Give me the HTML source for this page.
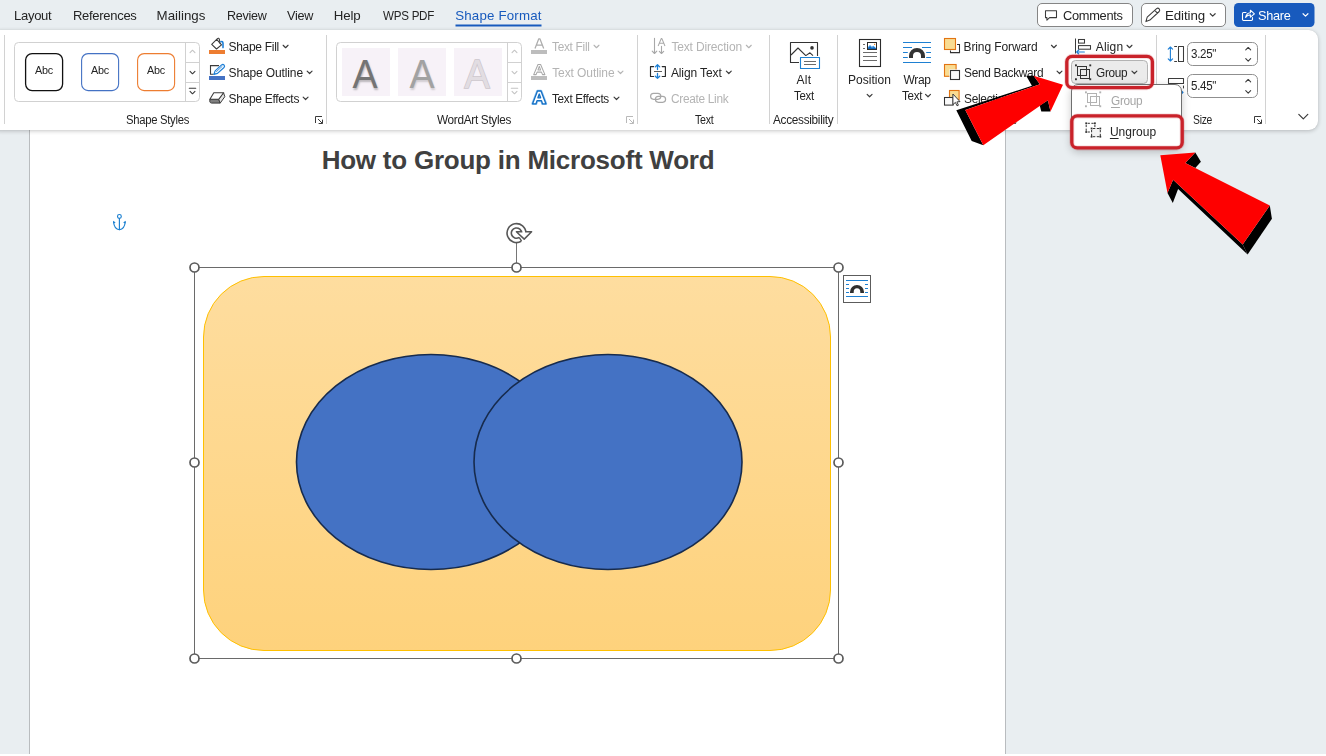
<!DOCTYPE html>
<html lang="en">
<head>
<meta charset="utf-8">
<title>How to Group in Microsoft Word</title>
<style>
*{box-sizing:border-box;margin:0;padding:0}
html,body{width:1326px;height:756px;overflow:hidden;background:#e9eef1}
body{position:relative;font-family:"Liberation Sans",sans-serif;font-size:13px;color:#242424}
.t{position:absolute;white-space:nowrap;line-height:16px;height:16px;transform-origin:0 50%}
.t u{text-decoration-thickness:1px;text-underline-offset:1.5px}
#tabbar{position:absolute;left:0;top:0;width:1326px;height:31px;background:#e9eef1}
#ribbon{position:absolute;left:-10px;top:30px;width:1328px;height:100px;background:#fff;border-radius:9px;box-shadow:0 1px 4px rgba(0,0,0,.22),0 0 1px rgba(0,0,0,.10)}
#page{position:absolute;left:29px;top:130px;width:977px;height:640px;background:#fff;border-left:1px solid #b9bcbf;border-right:1px solid #b9bcbf}
#title{position:absolute;left:0;top:143px;width:1036px;text-align:center;font-weight:bold;font-size:26px;line-height:34px;letter-spacing:-0.23px;color:#404040}
#menu{position:absolute;left:1071px;top:84px;width:111px;height:65px;background:#fff;border:1px solid #6f6f6f;border-radius:7px;box-shadow:0 3px 8px rgba(0,0,0,.22)}
svg{position:absolute;left:0;top:0;overflow:visible}
.gl{position:absolute;left:0;top:0;width:1326px;height:756px;will-change:transform;pointer-events:none}
.wa{position:absolute;font-size:40.5px;line-height:48px;width:48px;height:48px;text-align:center;top:50px;transform:scaleX(0.93)}
</style>
</head>
<body>
<div id="page"></div>
<div id="title">How to Group in Microsoft Word</div>

<svg width="1326" height="756" viewBox="0 0 1326 756">
  <defs>
    <linearGradient id="gold" x1="0" y1="0" x2="0" y2="1">
      <stop offset="0" stop-color="#fedd9f"/>
      <stop offset="1" stop-color="#fed27c"/>
    </linearGradient>
  </defs>
  <rect x="203.5" y="276.5" width="627" height="374" rx="60.5" ry="60.5" fill="url(#gold)" stroke="#ffc000" stroke-width="1"/>
  <ellipse cx="431" cy="462" rx="134.5" ry="107.5" fill="#4472c4" stroke="#172b4d" stroke-width="1.6"/>
  <ellipse cx="608" cy="462" rx="134" ry="107.5" fill="#4472c4" stroke="#172b4d" stroke-width="1.6"/>
  <rect x="194.5" y="267.5" width="644" height="391" fill="none" stroke="#6a6a6a" stroke-width="1"/>
  <line x1="516.5" y1="243" x2="516.5" y2="263" stroke="#767676" stroke-width="1"/>
  <g fill="#fff" stroke="#5a5a5a" stroke-width="1.7">
    <circle cx="194.5" cy="267.5" r="4.5"/><circle cx="516.5" cy="267.5" r="4.5"/><circle cx="838.5" cy="267.5" r="4.5"/>
    <circle cx="194.5" cy="462.5" r="4.5"/><circle cx="838.5" cy="462.5" r="4.5"/>
    <circle cx="194.5" cy="658.5" r="4.5"/><circle cx="516.5" cy="658.5" r="4.5"/><circle cx="838.5" cy="658.5" r="4.5"/>
  </g>
<!-- anchor -->
<g fill="none" stroke="#1a7fd0" stroke-width="1.15" stroke-linecap="round">
  <circle cx="119.4" cy="216.4" r="1.9"/>
  <path d="M119.4,218.6 V229.6"/>
  <path d="M113.6,222 Q114.2,229.2 119.4,229.7 Q124.6,229.2 125.2,222"/>
</g>
<path d="M113.1,220.8 L115.7,222.5 L113.3,223.6 Z M125.7,220.8 L123.1,222.5 L125.5,223.6 Z" fill="#1a7fd0"/>
<!-- rotate handle -->
<path d="M523.8,233.1 A7.3,7.3 0 1 0 520.15,239.42" fill="none" stroke="#575757" stroke-width="5.9"/>
<path d="M516.4,231.7 H531.6 L524.2,239.1 Z" fill="#fff" stroke="#575757" stroke-width="1.5" stroke-linejoin="round"/>
<path d="M523.8,233.6 V233.1 A7.3,7.3 0 1 0 520.15,239.42" fill="none" stroke="#fff" stroke-width="2.7"/>
<path d="M519.2,237.4 L521.6,241.2" stroke="#575757" stroke-width="1.3" fill="none"/>
<!-- layout options button -->
<rect x="843.5" y="275.5" width="27" height="27" fill="#fff" stroke="#5c5c5c"/>
<path d="M846,280.5 H868 M846,296.5 H868 M846,284.5 H849 M865,284.5 H868 M846,288.5 H849 M865,288.5 H868 M846,292.5 H849 M865,292.5 H868" stroke="#1e80d2" stroke-width="1" fill="none"/>
<path d="M850,293 V292 A7,7 0 0 1 864,292 V293 H860.3 V292 A3.3,3.7 0 0 0 853.7,292 V293 Z" fill="#2f2f2f"/>

</svg>

<div style="position:absolute;left:0;top:754px;width:1326px;height:2px;background:#fff"></div>
<div id="tabbar"></div>
<div id="ribbon"></div>

<svg width="1326" height="756" viewBox="0 0 1326 756">
<!-- ===== group separators ===== -->
<g stroke="#d2d2d2" stroke-width="1">
  <line x1="4.5" y1="35" x2="4.5" y2="124"/>
  <line x1="326.5" y1="35" x2="326.5" y2="124"/>
  <line x1="637.5" y1="35" x2="637.5" y2="124"/>
  <line x1="769.5" y1="35" x2="769.5" y2="124"/>
  <line x1="837.5" y1="35" x2="837.5" y2="124"/>
  <line x1="1156.5" y1="35" x2="1156.5" y2="124"/>
  <line x1="1265.5" y1="35" x2="1265.5" y2="124"/>
</g>
<!-- ===== Shape styles gallery ===== -->
<rect x="14.5" y="42.5" width="185" height="59" rx="4" fill="#fff" stroke="#d1d1d1"/>
<g stroke="#d1d1d1" stroke-width="1"><line x1="185.5" y1="43" x2="185.5" y2="101"/><line x1="186" y1="62.5" x2="199" y2="62.5"/><line x1="186" y1="82.5" x2="199" y2="82.5"/></g>
<rect x="25.6" y="53.6" width="37" height="37" rx="6.5" fill="#fff" stroke="#111" stroke-width="1.3"/>
<rect x="81.6" y="53.6" width="37" height="37" rx="6.5" fill="#fff" stroke="#4472c4" stroke-width="1.1"/>
<rect x="137.6" y="53.6" width="37" height="37" rx="6.5" fill="#fff" stroke="#ed7d31" stroke-width="1.1"/>
<g fill="none" stroke-width="1.1" stroke-linecap="round" stroke-linejoin="round">
  <polyline points="190.05,52.68 192.50,50.23 194.95,52.68" stroke="#c4c4c4"/>
  <polyline points="190.05,71.33 192.50,73.78 194.95,71.33" stroke="#3b3b3b"/>
  <line x1="189.3" y1="88.3" x2="195.7" y2="88.3" stroke="#3b3b3b"/>
  <polyline points="190.05,91.33 192.50,93.78 194.95,91.33" stroke="#3b3b3b"/>
</g>
<!-- Shape Fill icon -->
<rect x="209" y="50" width="16" height="4" fill="#ed7d31"/>
<g fill="none" stroke="#3b3b3b" stroke-width="1.1" stroke-linejoin="round" stroke-linecap="round">
  <path d="M211.7,44.4 L216.7,39.4 L221.5,44.9 L216.5,49 Z" fill="#fff"/>
  <path d="M216.7,39.6 Q217.4,37.9 218.6,38.3 Q219.7,38.8 219.8,43"/>
</g>
<path d="M220.9,41.7 Q222.7,40.9 223,43.4 V47.6" fill="none" stroke="#1e7fd6" stroke-width="1.6" stroke-linecap="round"/>
<!-- Shape Outline icon -->
<rect x="209" y="76" width="16" height="4" fill="#4472c4"/>
<path d="M219,65.6 H210.5 V74.2 H213.6" fill="none" stroke="#3b3b3b" stroke-width="1.1"/>
<path d="M213.9,74.5 L215.1,70.9 L221.6,64.9 Q223,63.9 224.1,65.1 Q225.1,66.3 224,67.5 L217.5,73.4 Z" fill="#fff" stroke="#1e7fd6" stroke-width="1.2" stroke-linejoin="round"/>
<path d="M216.2,71.8 L222.4,66.2" stroke="#1e7fd6" stroke-width="0.8" fill="none"/>
<path d="M213.9,74.5 L214.6,72.4 L216,73.8 Z" fill="#1e7fd6"/>
<!-- Shape Effects icon -->
<path d="M209.9,99.2 H218.7 L220.2,103.1 H211.6 Q210.2,103 209.8,101.6 Z" fill="#7f7f7f" stroke="#3b3b3b" stroke-width="1" stroke-linejoin="round"/>
<path d="M223.6,92.8 L224.8,96.7 L220.2,103.1 L218.7,99.2 Z" fill="#e4e4e4" stroke="#3b3b3b" stroke-width="1" stroke-linejoin="round"/>
<path d="M213.8,92.7 H223.6 L218.7,99.2 H209.9 Z" fill="#fff" stroke="#3b3b3b" stroke-width="1.05" stroke-linejoin="round"/>
<!-- chevrons for small buttons -->
<g fill="none" stroke="#3b3b3b" stroke-width="1.15" stroke-linecap="round" stroke-linejoin="round">
  <polyline points="283.15,45.27 285.60,47.73 288.05,45.27"/>
  <polyline points="307.15,71.08 309.60,73.52 312.05,71.08"/>
  <polyline points="303.15,97.08 305.60,99.52 308.05,97.08"/>
  <polyline points="614.05,97.08 616.50,99.52 618.95,97.08"/>
  <polyline points="726.35,71.08 728.80,73.52 731.25,71.08"/>
</g>
<g fill="none" stroke="#b4b4b4" stroke-width="1.15" stroke-linecap="round" stroke-linejoin="round">
  <polyline points="594.05,45.27 596.50,47.73 598.95,45.27"/>
  <polyline points="618.05,71.08 620.50,73.52 622.95,71.08"/>
  <polyline points="746.35,45.27 748.80,47.73 751.25,45.27"/>
</g>
<!-- dialog launchers -->
<g fill="none" stroke="#3b3b3b" stroke-width="1">
  <path d="M315.5,123 V116.5 H322"/><path d="M318,119 L322.3,123.3 M322.5,119.6 V123.5 H318.6"/>
  <path d="M1254.5,123 V116.5 H1261"/><path d="M1257,119 L1261.3,123.3 M1261.5,119.6 V123.5 H1257.6"/>
</g>
<g fill="none" stroke="#b9b9b9" stroke-width="1">
  <path d="M626.5,123 V116.5 H633"/><path d="M629,119 L633.3,123.3 M633.5,119.6 V123.5 H629.6"/>
</g>
<!-- ===== WordArt gallery ===== -->
<rect x="336.5" y="42.5" width="185" height="59" rx="4" fill="#fff" stroke="#d1d1d1"/>
<g stroke="#d1d1d1" stroke-width="1"><line x1="507.5" y1="43" x2="507.5" y2="101"/><line x1="508" y1="62.5" x2="521" y2="62.5"/><line x1="508" y1="82.5" x2="521" y2="82.5"/></g>
<rect x="342" y="48" width="48" height="48" fill="#f7f2f8"/>
<rect x="398" y="48" width="48" height="48" fill="#f7f2f8"/>
<rect x="454" y="48" width="48" height="48" fill="#f7f2f8"/>
<g fill="none" stroke="#c4c4c4" stroke-width="1.1" stroke-linecap="round" stroke-linejoin="round">
  <polyline points="512.05,52.68 514.50,50.23 516.95,52.68"/>
  <polyline points="512.05,71.33 514.50,73.78 516.95,71.33"/>
  <line x1="511.3" y1="88.3" x2="517.7" y2="88.3"/>
  <polyline points="512.05,91.33 514.50,93.78 516.95,91.33"/>
</g>
<!-- Text Fill / Text Outline / Text Effects icons -->
<rect x="531" y="50" width="16" height="4" fill="#bdbdbd"/>
<path d="M535,48.6 L538.8,38.8 H539.9 L543.7,48.6 M536.3,45.2 H542.4" fill="none" stroke="#adadad" stroke-width="1.25" stroke-linejoin="round"/>
<rect x="531" y="76" width="16" height="4" fill="#bdbdbd"/>
<path d="M533.7,74.6 L538,64.5 H540.6 L544.9,74.6 H542.5 L541.5,72.1 H537.1 L536.1,74.6 Z M538,69.9 H540.6 L539.3,66.4 Z" fill="#fff" stroke="#a8a8a8" stroke-width="1.05" stroke-linejoin="round" fill-rule="evenodd"/>
<path d="M532.6,103.8 L537.5,91 H541 L545.9,103.8 H542.5 L541.5,100.7 H537 L536,103.8 Z M537.9,97.8 H540.6 L539.25,94 Z" fill="#fff" stroke="#8fc4f2" stroke-width="2.6" stroke-linejoin="round" fill-rule="evenodd"/>
<path d="M532.6,103.8 L537.5,91 H541 L545.9,103.8 H542.5 L541.5,100.7 H537 L536,103.8 Z M537.9,97.8 H540.6 L539.25,94 Z" fill="#fff" stroke="#1670c4" stroke-width="1.3" stroke-linejoin="round" fill-rule="evenodd"/>
<!-- Text Direction icon -->
<g fill="none" stroke="#a8a8a8" stroke-width="1.1" stroke-linecap="round" stroke-linejoin="round">
  <path d="M654.5,38.2 V53.4 M652.2,51.2 L654.5,53.5 L656.8,51.2"/>
  <path d="M661.5,46.4 V53.4 M659.3,51.3 L661.5,53.5 L663.7,51.3"/>
  <path d="M658.3,45.6 L661.2,38.6 H661.9 L664.8,45.6 M659.4,43.2 H663.7"/>
</g>
<!-- Align Text icon -->
<g fill="none" stroke-linecap="round" stroke-linejoin="round">
  <path d="M653.6,66.6 H650.5 V76.5 H653.6 M662.2,66.6 H665.4 V76.5 H662.2" stroke="#2b2b2b" stroke-width="1.15"/>
  <line x1="654.4" y1="71.5" x2="661.6" y2="71.5" stroke="#555" stroke-width="0.95"/>
  <path d="M657.5,69.6 V64.8 M655.3,66.9 L657.5,64.7 L659.7,66.9 M657.5,73.4 V78.3 M655.3,76.2 L657.5,78.4 L659.7,76.2" stroke="#1b7fd6" stroke-width="1.3"/>
</g>
<!-- Create Link icon -->
<g fill="none" stroke="#a8a8a8" stroke-width="1.2">
  <rect x="650.6" y="93.4" width="10.2" height="5.9" rx="2.95"/>
  <rect x="655.4" y="96.4" width="10.2" height="5.9" rx="2.95"/>
</g>

<!-- ===== Alt Text icon ===== -->
<g fill="none" stroke-linejoin="round">
  <rect x="790.5" y="42.5" width="27" height="20" fill="#fff" stroke="#333" stroke-width="1.1"/>
  <path d="M791,55 L798,48 L805.8,55.6 L810,52.8 L813,55.6" stroke="#333" stroke-width="1.1"/>
  <circle cx="812" cy="47.9" r="1.8" fill="#333"/>
  <rect x="799" y="56" width="22" height="14" fill="#fff"/>
  <rect x="800.5" y="57.5" width="19" height="11" fill="#fff" stroke="#1e80d2" stroke-width="1.1"/>
  <path d="M804,61.5 H816 M804,64.5 H816" stroke="#6b6b6b" stroke-width="1"/>
</g>
<!-- ===== Position icon ===== -->
<g fill="none">
  <rect x="859.5" y="39.5" width="21" height="27" fill="#fff" stroke="#2b2b2b" stroke-width="1.1"/>
  <rect x="867.5" y="42.5" width="9" height="7" fill="#fff" stroke="#2b2b2b" stroke-width="1"/>
  <path d="M868,49 V47 L870,45 L871.8,46.8 L873.4,45.8 L876,48 V49 Z" fill="#3d97e6"/>
  <path d="M868,49 V48 L870,46.6 L872,48.2 L874,47.2 L876,48.6 V49 Z" fill="#1565b5"/>
  <rect x="874" y="43.8" width="1.2" height="1.2" fill="#f08a24"/>
  <path d="M863,44.5 H865 M863,48.5 H865 M863,52.5 H877 M863,56.5 H877 M863,60.5 H877" stroke="#6b6b6b" stroke-width="1"/>
</g>
<!-- ===== Wrap Text icon ===== -->
<g fill="none">
  <path d="M903,42.5 H931 M903,62.5 H931 M903,47.5 H912 M922,47.5 H931 M903,52.5 H907.8 M926.2,52.5 H931 M903,57.5 H907.8 M926.2,57.5 H931" stroke="#1e80d2" stroke-width="1"/>
  <path d="M909,58 V56 A8,8 0 0 1 925,56 V58 H921 V56 A4,4 0 0 0 913,56 V58 Z" fill="#333"/>
</g>
<g fill="none" stroke="#3b3b3b" stroke-width="1.15" stroke-linecap="round" stroke-linejoin="round">
  <polyline points="867.15,94.33 869.60,96.78 872.05,94.33"/>
  <polyline points="925.55,94.33 928.00,96.78 930.45,94.33"/>
  <polyline points="1051.45,45.27 1053.90,47.73 1056.35,45.27"/>
  <polyline points="1057.05,71.08 1059.50,73.52 1061.95,71.08"/>
  <polyline points="1127.05,45.27 1129.50,47.73 1131.95,45.27"/>
</g>
<!-- ===== Bring Forward ===== -->
<path d="M957,44.5 H959.5 V52.6 H950.5 V50.6" fill="none" stroke="#333" stroke-width="1.05"/>
<rect x="944.5" y="38.5" width="11" height="11" fill="#f9dc92" stroke="#e27412" stroke-width="1.1"/>
<!-- ===== Send Backward ===== -->
<rect x="944.5" y="64.5" width="11.6" height="11.8" fill="#f9dc92" stroke="#e27412" stroke-width="1.1"/>
<rect x="949.4" y="69.4" width="11.2" height="11.2" fill="#fff"/>
<rect x="950.5" y="70.5" width="9" height="9" fill="#fafafa" stroke="#333" stroke-width="1.1"/>
<!-- ===== Selection Pane ===== -->
<rect x="949.5" y="90.5" width="9.6" height="9" fill="#f9dc92" stroke="#e27412" stroke-width="1.1"/>
<rect x="944.5" y="97.5" width="8.6" height="7.6" fill="#fafafa" stroke="#333" stroke-width="1.05"/>
<path d="M952.9,94 V104.6 L955.4,102.4 L957,105.8 L958.4,105.2 L956.9,101.9 L960,101.6 Z" fill="#fff" stroke="#333" stroke-width="0.95" stroke-linejoin="round"/>
<!-- ===== Align ===== -->
<g fill="none" stroke="#3b3b3b" stroke-width="1.05">
  <line x1="1075.5" y1="38.5" x2="1075.5" y2="53.5"/>
  <rect x="1078.5" y="39.5" width="6" height="3.6" fill="#fff"/>
  <rect x="1078.5" y="45.6" width="12" height="3.6" fill="#fff"/>
</g>
<path d="M1084.4,52 H1076.6 M1078.8,50 L1076.6,52 L1078.8,54" fill="none" stroke="#1e7fd6" stroke-width="1.05" stroke-linecap="round" stroke-linejoin="round"/>
<!-- ===== Size icons ===== -->
<g fill="none" stroke-linecap="round" stroke-linejoin="round">
  <path d="M1170.4,47 V61 M1168.2,49.2 L1170.4,47 L1172.6,49.2 M1168.2,58.8 L1170.4,61 L1172.6,58.8" stroke="#1e7fd6" stroke-width="1.1"/>
  <path d="M1174.6,46.5 H1176.6 M1174.6,61.5 H1176.6" stroke="#3b3b3b" stroke-width="1"/>
  <rect x="1178.5" y="46.5" width="5" height="15" stroke="#3b3b3b" stroke-width="1.05" fill="#fff"/>
  <rect x="1168.5" y="78.5" width="15" height="5" stroke="#3b3b3b" stroke-width="1.05" fill="#fff"/>
  <path d="M1168.5,86 V88 M1183.5,86 V88" stroke="#3b3b3b" stroke-width="1"/>
  <path d="M1169,92.4 H1183 M1171.2,90.2 L1169,92.4 L1171.2,94.6 M1180.8,90.2 L1183,92.4 L1180.8,94.6" stroke="#1e7fd6" stroke-width="1.1"/>
</g>
<rect x="1187.5" y="42.5" width="70" height="23" rx="5" fill="#fff" stroke="#8f8f8f"/>
<rect x="1187.5" y="74.5" width="70" height="23" rx="5" fill="#fff" stroke="#8f8f8f"/>
<g fill="none" stroke="#3b3b3b" stroke-width="1.1" stroke-linecap="round" stroke-linejoin="round">
  <polyline points="1245.75,49.93 1248.20,47.48 1250.65,49.93"/>
  <polyline points="1245.75,58.68 1248.20,61.13 1250.65,58.68"/>
  <polyline points="1245.75,81.92 1248.20,79.48 1250.65,81.92"/>
  <polyline points="1245.75,90.68 1248.20,93.12 1250.65,90.68"/>
  <polyline points="1298.8,114.4 1303.3,118.9 1307.8,114.4" stroke-width="1.2"/>
</g>

<!-- ===== top right buttons ===== -->
<rect x="1037.5" y="3.5" width="95" height="23" rx="4.5" fill="#fff" stroke="#858585"/>
<rect x="1141.5" y="3.5" width="84" height="23" rx="4.5" fill="#fff" stroke="#858585"/>
<rect x="1234" y="3" width="80.5" height="24" rx="4.5" fill="#185abd"/>
<path d="M1045.5,10.8 H1056.5 V17.6 H1049.6 L1046.9,20.2 V17.6 H1045.5 Z" fill="none" stroke="#3b3b3b" stroke-width="1.05" stroke-linejoin="round"/>
<path d="M1145.9,21.6 L1147.2,17.2 L1156.6,8.6 Q1158,7.6 1159.2,8.9 Q1160.3,10.2 1159.2,11.5 L1149.9,20.1 Z M1154.8,10.4 L1157.4,13.2" fill="none" stroke="#3b3b3b" stroke-width="1.05" stroke-linejoin="round"/>
<g fill="none" stroke="#fff" stroke-width="1.1" stroke-linejoin="round" stroke-linecap="round">
  <path d="M1246,12.5 H1243.5 Q1242.5,12.6 1242.5,13.6 V19.4 Q1242.6,20.4 1243.5,20.5 H1251.4 Q1252.4,20.4 1252.5,19.4 V17.6"/>
  <path d="M1245.6,17.4 Q1246.6,13 1250.4,12.8 V10.2 L1254.4,13.8 L1250.4,17.2 V14.9 Q1247.6,14.8 1245.6,17.4 Z"/>
</g>
<g fill="none" stroke-width="1.15" stroke-linecap="round" stroke-linejoin="round">
  <polyline points="1210.25,13.72 1212.70,16.18 1215.15,13.72" stroke="#3b3b3b"/>
  <polyline points="1303.05,13.72 1305.50,16.18 1307.95,13.72" stroke="#fff"/>
</g>
<rect x="455.5" y="24.5" width="86" height="2" fill="#185abd"/>

<!-- Group button (pressed) -->
<rect x="1071.5" y="60.5" width="76" height="23" rx="4" fill="#ebebeb" stroke="#b3b3b3"/>
<g fill="none" stroke="#333" stroke-width="1"><rect x="1077.5" y="66.5" width="9" height="9" /><rect x="1080.5" y="69.5" width="9" height="9" /></g><g fill="#333"><rect x="1075.0" y="64.4" width="1.9" height="1.9" /><rect x="1089.3" y="64.4" width="1.9" height="1.9" /><rect x="1075.0" y="78.3" width="1.9" height="1.9" /><rect x="1089.3" y="78.3" width="1.9" height="1.9" /></g>
<polyline points="1131.95,71.08 1134.40,73.52 1136.85,71.08" fill="none" stroke="#3b3b3b" stroke-width="1.15" stroke-linecap="round" stroke-linejoin="round"/>

</svg>

<div class="wa" style="left:340.7px;color:#747474;text-shadow:1px 1.5px 2px rgba(0,0,0,.25)">A</div>
<div class="wa" style="left:397.7px;color:#a2a2a2;text-shadow:1px 1.5px 2px rgba(0,0,0,.16)">A</div>
<div class="wa" style="left:453.4px;color:#e2dde2;-webkit-text-stroke:1.5px #ccc6cc;paint-order:stroke fill">A</div>

<div class="gl">
<div class="t" style="left:13.82px;top:8px;font-size:13.3px;letter-spacing:-0.300px;transform:scaleX(0.9813);color:#242424;">Layout</div>
<div class="t" style="left:72.52px;top:8px;font-size:13.3px;letter-spacing:-0.300px;transform:scaleX(0.9782);color:#242424;">References</div>
<div class="t" style="left:156.60px;top:8px;font-size:13.3px;letter-spacing:0.000px;color:#242424;">Mailings</div>
<div class="t" style="left:226.86px;top:8px;font-size:13.3px;letter-spacing:-0.300px;transform:scaleX(0.9446);color:#242424;">Review</div>
<div class="t" style="left:287.20px;top:8px;font-size:13.3px;letter-spacing:-0.300px;transform:scaleX(0.9502);color:#242424;">View</div>
<div class="t" style="left:333.70px;top:8px;font-size:13.3px;letter-spacing:-0.100px;color:#242424;">Help</div>
<div class="t" style="left:383.30px;top:8px;font-size:13.3px;letter-spacing:-0.300px;transform:scaleX(0.8733);color:#242424;">WPS PDF</div>
<div class="t" style="left:455.20px;top:8px;font-size:13.3px;letter-spacing:0.182px;color:#185abd;">Shape Format</div>
<div class="t" style="left:1062.50px;top:8px;font-size:13.3px;letter-spacing:-0.300px;transform:scaleX(0.9645);color:#242424;">Comments</div>
<div class="t" style="left:1164.90px;top:8px;font-size:13.3px;letter-spacing:-0.050px;color:#242424;">Editing</div>
<div class="t" style="left:1257.75px;top:8px;font-size:13.3px;letter-spacing:-0.300px;transform:scaleX(0.9543);color:#fff;">Share</div>
<div class="t" style="left:35.30px;top:62px;font-size:11px;letter-spacing:-0.300px;transform:scaleX(0.9837);color:#242424;">Abc</div>
<div class="t" style="left:91.30px;top:62px;font-size:11px;letter-spacing:-0.300px;transform:scaleX(0.9837);color:#242424;">Abc</div>
<div class="t" style="left:147.30px;top:62px;font-size:11px;letter-spacing:-0.300px;transform:scaleX(0.9837);color:#242424;">Abc</div>
<div class="t" style="left:228.50px;top:39px;font-size:12px;letter-spacing:-0.300px;color:#242424;">Shape Fill</div>
<div class="t" style="left:228.50px;top:65px;font-size:12px;letter-spacing:-0.125px;color:#242424;">Shape Outline</div>
<div class="t" style="left:228.50px;top:91px;font-size:12px;letter-spacing:-0.300px;color:#242424;">Shape Effects</div>
<div class="t" style="left:125.96px;top:112px;font-size:12px;letter-spacing:-0.300px;transform:scaleX(0.9385);color:#242424;">Shape Styles</div>
<div class="t" style="left:552.20px;top:39px;font-size:12px;letter-spacing:-0.300px;transform:scaleX(0.9894);color:#b4b4b4;">Text Fill</div>
<div class="t" style="left:552.20px;top:65px;font-size:12px;letter-spacing:-0.091px;color:#b4b4b4;">Text Outline</div>
<div class="t" style="left:552.20px;top:91px;font-size:12px;letter-spacing:-0.300px;transform:scaleX(0.9779);color:#242424;">Text Effects</div>
<div class="t" style="left:436.80px;top:112px;font-size:12px;letter-spacing:-0.300px;transform:scaleX(0.9803);color:#242424;">WordArt Styles</div>
<div class="t" style="left:671.40px;top:39px;font-size:12px;letter-spacing:-0.154px;color:#b4b4b4;">Text Direction</div>
<div class="t" style="left:670.90px;top:65px;font-size:12px;letter-spacing:-0.100px;color:#242424;">Align Text</div>
<div class="t" style="left:671.40px;top:91px;font-size:12px;letter-spacing:-0.300px;transform:scaleX(0.9879);color:#b4b4b4;">Create Link</div>
<div class="t" style="left:694.80px;top:112px;font-size:12px;letter-spacing:-0.300px;transform:scaleX(0.8910);color:#242424;">Text</div>
<div class="t" style="left:796.50px;top:72px;font-size:12px;letter-spacing:0.250px;color:#242424;">Alt</div>
<div class="t" style="left:793.70px;top:88px;font-size:12px;letter-spacing:-0.300px;transform:scaleX(0.9526);color:#242424;">Text</div>
<div class="t" style="left:773.20px;top:112px;font-size:12px;letter-spacing:-0.300px;transform:scaleX(0.9837);color:#242424;">Accessibility</div>
<div class="t" style="left:848.10px;top:72px;font-size:12px;letter-spacing:0.014px;color:#242424;">Position</div>
<div class="t" style="left:903.40px;top:72px;font-size:12px;letter-spacing:-0.300px;color:#242424;">Wrap</div>
<div class="t" style="left:902.20px;top:88px;font-size:12px;letter-spacing:-0.300px;transform:scaleX(0.9668);color:#242424;">Text</div>
<div class="t" style="left:963.50px;top:39px;font-size:12px;letter-spacing:-0.108px;color:#242424;">Bring Forward</div>
<div class="t" style="left:963.51px;top:65px;font-size:12px;letter-spacing:-0.300px;transform:scaleX(0.9899);color:#242424;">Send Backward</div>
<div class="t" style="left:963.51px;top:91px;font-size:12px;letter-spacing:-0.300px;transform:scaleX(0.9921);color:#242424;">Selection Pane</div>
<div class="t" style="left:977.00px;top:112px;font-size:12px;letter-spacing:-0.300px;transform:scaleX(0.9830);color:#242424;">Arrange</div>
<div class="t" style="left:1095.70px;top:39px;font-size:12px;letter-spacing:0.200px;color:#242424;">Align</div>
<div class="t" style="left:1096.00px;top:65px;font-size:12px;letter-spacing:-0.300px;transform:scaleX(0.9843);color:#242424;">Group</div>
<div class="t" style="left:1190.80px;top:46px;font-size:12px;letter-spacing:-0.300px;transform:scaleX(0.9612);color:#242424;">3.25"</div>
<div class="t" style="left:1190.80px;top:78px;font-size:12px;letter-spacing:-0.300px;transform:scaleX(0.9612);color:#242424;">5.45"</div>
<div class="t" style="left:1193.14px;top:112px;font-size:12px;letter-spacing:-0.300px;transform:scaleX(0.8626);color:#242424;">Size</div>
</div>

<div id="menu"></div>
<div class="gl">
<div class="t" style="left:1110.90px;top:93px;font-size:12px;letter-spacing:-0.300px;transform:scaleX(0.9843);color:#a6a6a6;"><u>G</u>roup</div>
<div class="t" style="left:1109.90px;top:124px;font-size:12px;letter-spacing:0.050px;color:#242424;"><u>U</u>ngroup</div>
</div>
<svg width="1326" height="756" viewBox="0 0 1326 756">
<!-- dropdown icons -->
<g fill="none" stroke="#b2b2b2" stroke-width="1"><rect x="1087.5" y="93.5" width="9" height="9" /><rect x="1090.5" y="96.5" width="9" height="9" /></g><g fill="#b2b2b2"><rect x="1085.0" y="91.4" width="1.9" height="1.9" /><rect x="1099.3" y="91.4" width="1.9" height="1.9" /><rect x="1085.0" y="105.3" width="1.9" height="1.9" /><rect x="1099.3" y="105.3" width="1.9" height="1.9" /></g>
<rect x="1091.6" y="128.6" width="8.6" height="8" fill="#f3f3f3"/>
<g fill="none" stroke="#333" stroke-width="1" stroke-dasharray="2.3 1.5">
  <path d="M1087.6,123.3 H1094.4"/><path d="M1086.2,124.8 V131.4"/><path d="M1094.9,124.8 V127.4"/><path d="M1087.6,132 H1090.4"/>
  <path d="M1093,128.5 H1099.6"/><path d="M1091.6,130 V136"/><path d="M1100.3,130 V136"/><path d="M1093,136.7 H1099.6"/>
</g>
<g fill="#333">
  <rect x="1085.3" y="122.4" width="1.8" height="1.8"/><rect x="1094" y="122.4" width="1.8" height="1.8"/><rect x="1085.3" y="131.1" width="1.8" height="1.8"/>
  <rect x="1090.7" y="127.6" width="1.8" height="1.8"/><rect x="1099.4" y="127.6" width="1.8" height="1.8"/><rect x="1090.7" y="135.8" width="1.8" height="1.8"/><rect x="1099.4" y="135.8" width="1.8" height="1.8"/>
</g>
<!-- red highlight boxes -->
<g fill="none" stroke="#c9222a">
<rect x="1066.8" y="56.3" width="85.6" height="31.4" rx="5.5" stroke-width="5" stroke-opacity="0.18"/>
<rect x="1071.8" y="115.9" width="110.4" height="32" rx="5.5" stroke-width="5" stroke-opacity="0.18"/>
<rect x="1066.8" y="56.3" width="85.6" height="31.4" rx="5.5" stroke-width="3.3"/>
<rect x="1071.8" y="115.9" width="110.4" height="32" rx="5.5" stroke-width="3.3"/>
</g>
<!-- arrow 1 -->
<path d="M956.3,110.2 L1031.9,85.8 L1026.2,75.8 L1033.6,75.8 L1039.9,84.3 L965.3,110 L983.3,145.3 L971.7,141.1 Z" fill="#000"/>
<path d="M1047.9,100.2 L1050.5,111.5 L1041.3,111.5 L1039.7,105.5 Z" fill="#000"/>
<path d="M1063,84.8 L1033.6,75.8 L1039.9,84.3 L965.3,110 L983.3,145.3 L1047.9,100.2 L1050.5,111.5 Z" fill="#fe0000"/>
<!-- arrow 2 -->
<path d="M1195.3,152.6 L1200.9,161.7 L1195.3,168.1 L1185.3,162.9 Z" fill="#000"/>
<path d="M1269.8,205.5 L1271.9,218.7 L1247.6,254.5 L1242.7,244.6 Z" fill="#000"/>
<path d="M1167.5,192.9 L1172.8,203.1 L1178.1,189.1 L1247.6,254.5 L1242.7,244.6 L1173.1,179.7 Z" fill="#000"/>
<path d="M1160.3,155.3 L1195.3,152.6 L1185.3,162.9 L1269.8,205.5 L1242.7,244.6 L1173.1,179.7 L1167.5,192.9 Z" fill="#fe0000"/>

</svg>
</body>
</html>
